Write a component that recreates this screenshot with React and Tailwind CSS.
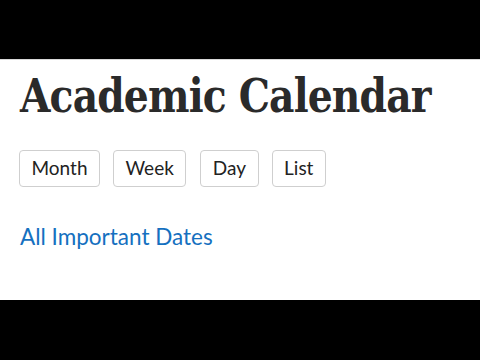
import React from 'react';

const views = [
  { label: 'Month', gap: '' },
  { label: 'Week', gap: 'ml-[13px]' },
  { label: 'Day', gap: 'ml-[14px]' },
  { label: 'List', gap: 'ml-[13px]' },
];

export default function App() {
  return (
    <div className="w-[480px] h-[360px] bg-black flex flex-col overflow-hidden">
      <div className="h-[59px] shrink-0 bg-black" />
      <div className="h-[241px] shrink-0 bg-white border-t border-[#d9d9d9] px-[20px]">
        <h1
          className="mt-[8px] text-[47px] leading-[56px] font-bold text-[#2a2a2a] tracking-[-1px] whitespace-nowrap origin-left scale-x-[0.835]"
          style={{ fontFamily: '"DejaVu Serif", serif' }}
        >
          Academic Calendar
        </h1>
        <div className="mt-[26px] -ml-[1px] flex" style={{ fontFamily: 'Lato, sans-serif' }}>
          {views.map(v => (
            <button
              key={v.label}
              className={`h-[37px] px-[11.5px] border border-[#cfcfcf] rounded-[4px] bg-white text-[19px] text-[#222] ${v.gap}`}
            >
              {v.label}
            </button>
          ))}
        </div>
        <a
          href="#"
          className="block mt-[37px] text-[22.5px] leading-[26px] text-[#1570c0]"
          style={{ fontFamily: 'Lato, sans-serif' }}
        >
          All Important Dates
        </a>
      </div>
      <div className="flex-1 bg-black" />
    </div>
  );
}
